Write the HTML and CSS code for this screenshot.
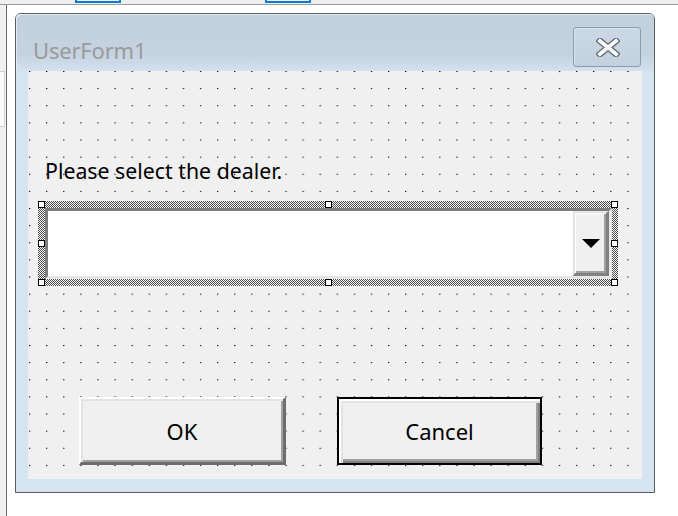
FILE: index.html
```html
<!DOCTYPE html>
<html lang="en">
<head>
  <meta charset="utf-8">
  <title>UserForm1</title>
  <link rel="stylesheet" href="styles.css">
</head>
<body>
  <div class="topstrip">
    <div class="sel-box first"></div>
    <div class="sel-box second"></div>
  </div>
  <div class="main">
    <div class="side">
      <div class="side-panel"></div>
    </div>
    <div class="workspace">
      <div class="window">
        <div class="titlebar">
          <span class="title">UserForm1</span>
          <button class="close-btn" title="Close">
            <svg width="24" height="19" viewBox="0 0 24 19">
              <path d="M4 3 L20 16 M20 3 L4 16" stroke="#5b6168" stroke-width="6.4" stroke-linecap="square" fill="none"/>
              <path d="M4 3 L20 16 M20 3 L4 16" stroke="#ffffff" stroke-width="4" stroke-linecap="square" fill="none"/>
            </svg>
          </button>
        </div>
        <div class="frame">
          <div class="client">
            <div class="label">Please select the dealer.</div>
            <div class="select-frame">
              <div class="combo">
                <div class="combo-field"></div>
                <div class="combo-btn">
                  <span class="arrow"></span>
                </div>
              </div>
              <span class="handle tl"></span>
              <span class="handle tm"></span>
              <span class="handle tr"></span>
              <span class="handle ml"></span>
              <span class="handle mr"></span>
              <span class="handle bl"></span>
              <span class="handle bm"></span>
              <span class="handle br"></span>
            </div>
            <div class="buttons">
              <button class="form-btn ok-btn">OK</button>
              <button class="form-btn cancel-btn">Cancel</button>
            </div>
          </div>
        </div>
      </div>
    </div>
  </div>
</body>
</html>
```

FILE: styles.css
```css
body {
  margin: 0;
  width: 678px;
  height: 516px;
  overflow: hidden;
  background-color: #fff;
  font-family: "Noto Sans", "Open Sans", Arial, sans-serif;
  color: #000;
}

.topstrip {
  display: flex;
  height: 5px;
  background-color: #f0f0f0;
  border-bottom: 1px solid #9a9a9a;
  box-sizing: border-box;
  overflow: hidden;
}

.sel-box {
  width: 46px;
  height: 10px;
  margin-top: -7px;
  border: 2px solid #0a7ad6;
  box-sizing: border-box;
}

.sel-box.first {
  margin-left: 75px;
}

.sel-box.second {
  margin-left: 144px;
}

.main {
  display: flex;
  height: 511px;
}

.side {
  width: 6px;
  background-color: #f0f0f0;
  border-right: 1px solid #6a6a6a;
  padding-top: 66px;
}

.side-panel {
  width: 4px;
  height: 54px;
  background-color: #fbfbfb;
  border-right: 1px solid #d4d4d4;
  border-bottom: 1px solid #d4d4d4;
  border-top: 1px solid #cfcfcf;
}

.workspace {
  flex: 1;
  padding: 8px 0 0 8px;
}

.window {
  width: 640px;
  height: 480px;
  box-sizing: border-box;
  border: 1px solid #5a5e63;
  border-radius: 6px 6px 0 0;
  background-color: #d6e4f2;
  display: flex;
  flex-direction: column;
}

.titlebar {
  height: 57px;
  display: flex;
  align-items: flex-start;
  justify-content: space-between;
  padding: 13px 13px 0 17px;
  box-sizing: border-box;
  border-radius: 5px 5px 0 0;
  background: linear-gradient(#c2d0de 0%, #c5d3e1 70%, #d3e1ef 100%);
  box-shadow: inset 1px 1px 0 #e4ecf4;
}

.title {
  font-size: 22px;
  color: #9a9a9a;
  margin-top: 8px;
  letter-spacing: -0.2px;
}

.close-btn {
  width: 68px;
  height: 40px;
  border: 1px solid #8c9cb1;
  border-radius: 3px;
  background: linear-gradient(#cbd8e5, #c3d1df);
  box-shadow: inset 1px 1px 0 #d9e3ee;
  padding: 0;
  display: flex;
  align-items: center;
  justify-content: center;
}

.close-btn svg {
  margin-left: 1px;
}

.frame {
  flex: 1;
  padding: 0 12px 13px 12px;
}

.client {
  height: 408px;
  background-color: #f0f0f0;
  background-image: radial-gradient(circle at 1.5px 0.5px, #000 0.75px, transparent 0.95px);
  background-size: 17.1px 17.13px;
  background-position: 0 0;
  padding-top: 86px;
  box-sizing: border-box;
}

.label {
  font-size: 21.3px;
  line-height: 28px;
  margin-left: 17px;
  height: 44px;
}

.select-frame {
  position: relative;
  width: 580px;
  height: 85px;
  margin-left: 10px;
  padding: 7px;
  box-sizing: border-box;
  background-color: #f0f0f0;
  background-image: repeating-conic-gradient(#4a4a4a 0 25%, #fdfdfd 0 50%);
  background-size: 2px 2px;
}

.combo {
  display: flex;
  height: 71px;
  box-sizing: border-box;
  border-style: solid;
  border-width: 3px;
  border-color: #7d7d7d #e6e6e6 #e6e6e6 #7d7d7d;
  background-color: #fff;
  margin-right: -1px;
}

.combo-field {
  flex: 1;
  background-color: #fff;
}

.combo-btn {
  width: 36px;
  background-color: #f0f0f0;
  box-sizing: border-box;
  border-style: solid;
  border-width: 2px 3px 3px 2px;
  border-color: #e3e3e3 #808080 #808080 #e3e3e3;
  box-shadow: inset 1px 1px 0 #fff, inset -2px -2px 0 #a0a0a0;
  display: flex;
  align-items: center;
  justify-content: center;
}

.arrow {
  width: 0;
  height: 0;
  border-left: 9px solid transparent;
  border-right: 9px solid transparent;
  border-top: 9px solid #000;
  margin-left: 1px;
}

.handle {
  position: absolute;
  width: 7px;
  height: 7px;
  box-sizing: border-box;
  border: 1px solid #000;
  background-color: #fff;
}

.handle.tl { left: 0; top: 0; }
.handle.tm { left: 287px; top: 0; }
.handle.tr { right: 0; top: 0; }
.handle.ml { left: 0; top: 39px; }
.handle.mr { right: 0; top: 39px; }
.handle.bl { left: 0; bottom: 0; }
.handle.bm { left: 287px; bottom: 0; }
.handle.br { right: 0; bottom: 0; }

.buttons {
  display: flex;
  margin-top: 111px;
  padding-left: 51px;
  gap: 51px;
}

.form-btn {
  height: 68px;
  background-color: #f0f0f0;
  font-family: "Noto Sans", "Open Sans", Arial, sans-serif;
  font-size: 22px;
  color: #000;
  padding: 0;
  box-sizing: border-box;
  border-style: solid;
  border-width: 2px 3px 3px 2px;
  border-color: #fff #6d6d6d #6d6d6d #fff;
  box-shadow: inset 2px 2px 0 #e3e3e3, inset -2px -2px 0 #a0a0a0;
}

.ok-btn {
  width: 207px;
}

.cancel-btn {
  width: 205px;
  border-color: #000;
  border-width: 2px;
  box-shadow: inset 2px 2px 0 #fff, inset 4px 4px 0 #e3e3e3, inset -2px -2px 0 #808080, inset -4px -4px 0 #a0a0a0;
}
```
